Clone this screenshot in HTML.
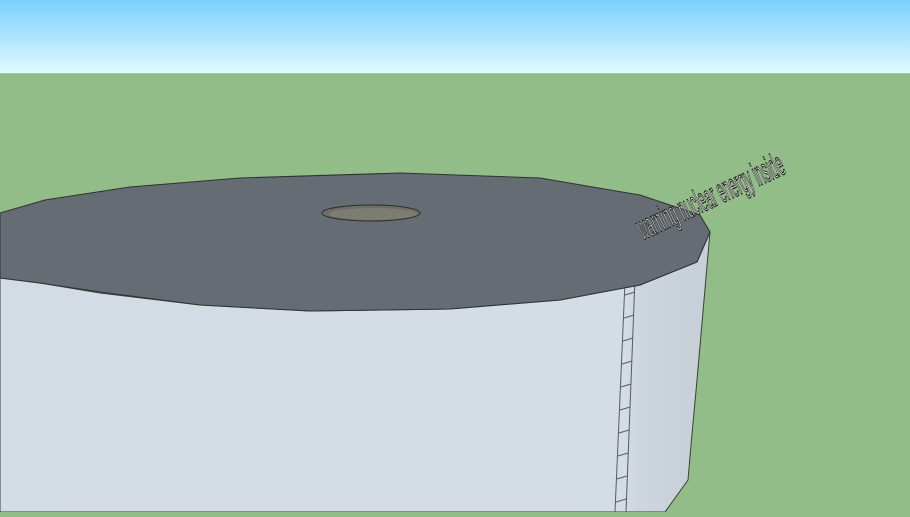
<!DOCTYPE html>
<html><head><style>html,body{margin:0;padding:0;overflow:hidden;background:#92bd88}</style></head>
<body>
<svg width="910" height="512" viewBox="0 0 910 512" xmlns="http://www.w3.org/2000/svg">
<defs>
<linearGradient id="sky" x1="0" y1="0" x2="0" y2="1">
<stop offset="0" stop-color="#7acffe"/><stop offset="1" stop-color="#e0faff"/>
</linearGradient>
<linearGradient id="wall" x1="0" y1="0" x2="1" y2="0">
<stop offset="0" stop-color="#d3dbe4"/><stop offset="0.88" stop-color="#d4dce5"/><stop offset="0.9" stop-color="#cdd5de"/><stop offset="1" stop-color="#c6ced7"/>
</linearGradient>
</defs>
<rect x="0" y="0" width="910" height="73" fill="url(#sky)"/>
<rect x="0" y="73" width="910" height="439" fill="#92bd88"/>
<rect x="0" y="73" width="910" height="1" fill="#a8cca0"/>
<path d="M0,278 L40,283 L100,293 L200,305 L310,311 L450,309 L560,300 L640,285 L697,262 L710,232 L697,380 L691,445 L688,480 L665,512 L0,512 Z" fill="url(#wall)" stroke="#3a3f3a" stroke-width="1"/>
<g stroke="#555c62" stroke-width="1" fill="none">
<path d="M625,282 L615,512 M635,278 L626,512"/>
<path d="M625,295 L635,292 M624,318 L634,315 M623,341 L633,338 M622,364 L632,361 M621,387 L631,384 M620,410 L630,407 M619,433 L629,430 M618,456 L628,453 M617,479 L627,476 M616,502 L626,499"/>
</g>
<path d="M0,213 L45,200 L130,187 L240,178 L400,173 L540,178 L640,195 L700,215 L710,232 L697,262 L640,285 L560,300 L450,309 L310,311 L200,305 L100,292 L40,283 L0,278 Z" fill="#666c73" stroke="#2e3330" stroke-width="1"/>
<ellipse cx="371" cy="213" rx="49" ry="8" fill="#6f6e66" stroke="#2c2c28" stroke-width="1"/>
<ellipse cx="373" cy="214" rx="44" ry="6" fill="#7d7c72"/>
<text x="0" y="0" font-family="Liberation Sans Narrow, Liberation Sans, sans-serif" font-size="26" fill="#e8eae8" stroke="#222" stroke-width="1" transform="translate(643,240) rotate(-25) scale(0.46,1.3)">warning nuclear energy inside</text>
</svg>
</body></html>
